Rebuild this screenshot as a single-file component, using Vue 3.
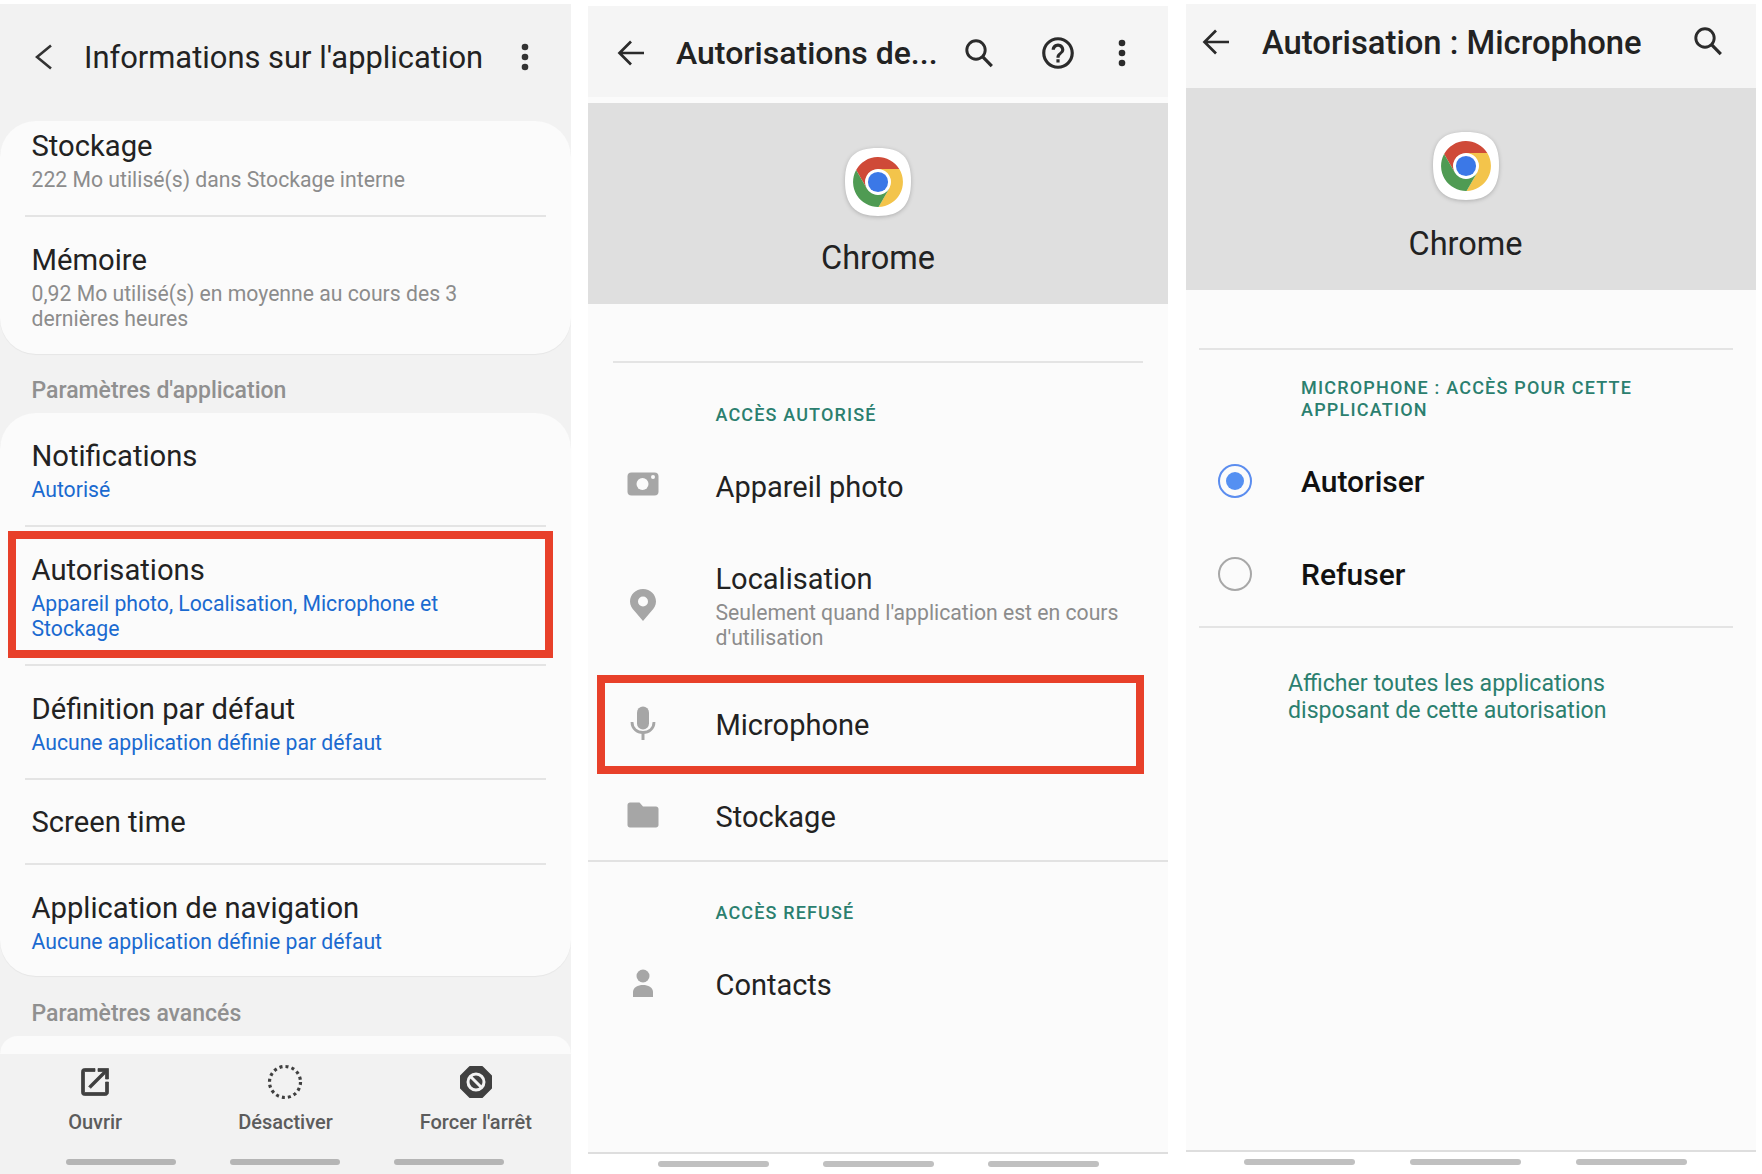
<template>
  <div class="screens">
    <!-- App info -->
    <section class="phone phone--info">
      <header class="info-head">
        <svg class="info-back" width="18" height="26" viewBox="0 0 18 26"><path d="M16 1.5 2 13l14 11.5" fill="none" stroke="#333" stroke-width="2.6" /></svg>
        <h1 class="info-title">Informations sur l'application</h1>
        <svg class="info-dots" width="8" height="28" viewBox="0 0 8 28"><circle cx="4" cy="4" r="3.3" /><circle cx="4" cy="14" r="3.3" /><circle cx="4" cy="24" r="3.3" /></svg>
      </header>

      <div class="card">
        <div class="row row--first">
          <div class="row__title">Stockage</div>
          <div class="row__sub">222 Mo utilisé(s) dans Stockage interne</div>
        </div>
        <div class="sep"></div>
        <div class="row row--memory">
          <div class="row__title">Mémoire</div>
          <div class="row__sub">0,92 Mo utilisé(s) en moyenne au cours des 3<br />dernières heures</div>
        </div>
      </div>

      <div class="group-label">Paramètres d'application</div>

      <div class="card">
        <div class="row row--notif">
          <div class="row__title">Notifications</div>
          <div class="row__sub row__sub--blue">Autorisé</div>
        </div>
        <div class="sep"></div>
        <div class="row">
          <div class="row__title">Autorisations</div>
          <div class="row__sub row__sub--blue">Appareil photo, Localisation, Microphone et<br />Stockage</div>
          <div class="mark mark--perm"></div>
        </div>
        <div class="sep"></div>
        <div class="row">
          <div class="row__title">Définition par défaut</div>
          <div class="row__sub row__sub--blue">Aucune application définie par défaut</div>
        </div>
        <div class="sep"></div>
        <div class="row row--screen">
          <div class="row__title">Screen time</div>
        </div>
        <div class="sep"></div>
        <div class="row row--nav">
          <div class="row__title">Application de navigation</div>
          <div class="row__sub row__sub--blue">Aucune application définie par défaut</div>
        </div>
      </div>

      <div class="group-label group-label--adv">Paramètres avancés</div>
      <div class="card card--stub"></div>

      <footer class="actions">
        <div class="actions__row">
          <div class="action">
            <svg width="36" height="36" viewBox="0 0 24 24"><path fill="#404040" stroke="#404040" stroke-width=".5" d="M19 19H5V5h7V3H5a2 2 0 0 0-2 2v14a2 2 0 0 0 2 2h14c1.1 0 2-.9 2-2v-7h-2v7zM14 3v2h3.59l-9.83 9.83 1.41 1.41L19 6.41V10h2V3h-7z" /></svg>
            <span>Ouvrir</span>
          </div>
          <div class="action">
            <svg width="36" height="36" viewBox="0 0 36 36"><circle cx="18" cy="18" r="15.5" fill="none" stroke="#404040" stroke-width="3.2" stroke-dasharray="3 3.09" /></svg>
            <span>Désactiver</span>
          </div>
          <div class="action">
            <svg width="36" height="36" viewBox="0 0 36 36">
              <path fill="#404040" stroke="#404040" stroke-width="2" stroke-linejoin="round" d="M12 3h12l9 9v12l-9 9H12l-9-9V12z" />
              <circle cx="18" cy="18" r="8" fill="none" stroke="#f2f2f2" stroke-width="3" />
              <path d="m13 13 10 10" stroke="#f2f2f2" stroke-width="3" />
            </svg>
            <span>Forcer l'arrêt</span>
          </div>
        </div>
        <div class="pills pills--info">
          <i v-for="n in 3" :key="n"></i>
        </div>
      </footer>
    </section>

    <!-- App permissions -->
    <section class="phone phone--perms">
      <header class="bar bar--perms">
        <svg class="bar__back" width="28" height="26" viewBox="0 0 28 26"><path d="M27 13H3M14 1.5 2.5 13 14 24.5" fill="none" stroke="#2b2b2b" stroke-width="2.7" /></svg>
        <h1 class="bar__title">Autorisations de...</h1>
        <svg class="bar__search" width="30" height="30" viewBox="0 0 30 30"><circle cx="12" cy="12" r="9.2" fill="none" stroke="#2b2b2b" stroke-width="2.9" /><path d="m18.8 18.8 9 9.4" stroke="#2b2b2b" stroke-width="3.2" /></svg>
        <svg class="bar__help" width="38" height="38" viewBox="0 0 24 24"><path fill="#2b2b2b" d="M11 18h2v-2h-2v2zm1-16C6.48 2 2 6.48 2 12s4.48 10 10 10 10-4.48 10-10S17.52 2 12 2zm0 18c-4.41 0-8-3.59-8-8s3.59-8 8-8 8 3.59 8 8-3.59 8-8 8zm0-14c-2.21 0-4 1.79-4 4h2c0-1.1.9-2 2-2s2 .9 2 2c0 2-3 1.75-3 5h2c0-2.25 3-2.5 3-5 0-2.21-1.79-4-4-4z" /></svg>
        <svg class="bar__dots" width="8" height="28" viewBox="0 0 8 28"><circle cx="4" cy="4" r="3.3" /><circle cx="4" cy="14" r="3.3" /><circle cx="4" cy="24" r="3.3" /></svg>
      </header>

      <div class="hero hero--perms">
        <svg class="chrome" width="68" height="70" viewBox="0 0 68 70">
          <path fill="#fff" d="M34 1C57 1 67 10 67 34S57 69 34 69 1 58 1 34 11 1 34 1z" />
          <g :transform="chromeMove">
            <path fill="#cf4a38" :d="chromeRed" />
            <path fill="#f3c44b" :d="chromeYellow" />
            <path fill="#4f9b53" :d="chromeGreen" />
            <circle r="13" fill="#fff" />
            <circle r="10.5" fill="#3b78e7" />
          </g>
        </svg>
        <div class="hero__name">Chrome</div>
      </div>

      <div class="perm-list">
        <div class="sep sep--perms"></div>
        <div class="caption caption--allowed">ACCÈS AUTORISÉ</div>

        <div class="perm perm--top">
          <div class="perm__icon perm__icon--camera">
            <svg width="32" height="24" viewBox="0 0 32 24">
              <rect x=".5" y=".5" width="31" height="23" rx="4" fill="#a6a6a6" />
              <circle cx="15.5" cy="12" r="6" fill="#fbfbfb" />
              <circle cx="26" cy="5" r="2" fill="#fbfbfb" />
            </svg>
          </div>
          <div class="perm__text">
            <div class="perm__title">Appareil photo</div>
          </div>
        </div>

        <div class="perm">
          <div class="perm__icon perm__icon--pin">
            <svg width="28" height="34" viewBox="0 0 28 34">
              <path fill="#a6a6a6" d="M14 1C6.500 1 1 6.600 1 13.500c0 4 2 6.800 4.500 9.500L14 33l8.500-10C25 20.300 27 17.500 27 13.500 27 6.600 21.500 1 14 1z" />
              <circle cx="14" cy="13.500" r="5" fill="#fbfbfb" />
            </svg>
          </div>
          <div class="perm__text">
            <div class="perm__title">Localisation</div>
            <div class="perm__sub">Seulement quand l'application est en cours<br />d'utilisation</div>
          </div>
        </div>

        <div class="perm perm--mic">
          <div class="perm__icon">
            <svg width="26" height="34" viewBox="0 0 26 34">
              <rect x="7" y=".5" width="12" height="23" rx="6" fill="#a6a6a6" />
              <path d="M2 16c0 6.500 5 10.500 11 10.500S24 22.500 24 16" fill="none" stroke="#a6a6a6" stroke-width="2.8" />
              <path d="M13 26v8" stroke="#a6a6a6" stroke-width="3" />
            </svg>
          </div>
          <div class="perm__text">
            <div class="perm__title">Microphone</div>
          </div>
          <div class="mark mark--mic"></div>
        </div>

        <div class="perm perm--last">
          <div class="perm__icon">
            <svg width="32" height="26" viewBox="0 0 32 26"><path fill="#a6a6a6" d="M3 .5h9.500L16 4.500h13c1.400 0 2.500 1.100 2.500 2.500v16c0 1.400-1.100 2.500-2.500 2.500H3C1.600 25.500.5 24.400.5 23V3C.5 1.600 1.600.5 3 .5z" /></svg>
          </div>
          <div class="perm__text">
            <div class="perm__title">Stockage</div>
          </div>
        </div>

        <div class="rule"></div>
        <div class="caption caption--denied">ACCÈS REFUSÉ</div>

        <div class="perm perm--contacts">
          <div class="perm__icon">
            <svg width="22" height="28" viewBox="0 0 22 28">
              <circle cx="11" cy="7" r="6.5" fill="#a6a6a6" />
              <path fill="#a6a6a6" d="M1 28v-5c0-4.500 5-7 10-7s10 2.500 10 7v5z" />
            </svg>
          </div>
          <div class="perm__text">
            <div class="perm__title">Contacts</div>
          </div>
        </div>
      </div>

      <footer class="nav-foot nav-foot--perms">
        <div class="pills pills--perms">
          <i v-for="n in 3" :key="n"></i>
        </div>
      </footer>
    </section>

    <!-- Microphone permission -->
    <section class="phone phone--mic">
      <header class="bar bar--mic">
        <svg class="bar__back" width="28" height="26" viewBox="0 0 28 26"><path d="M27 13H3M14 1.5 2.5 13 14 24.5" fill="none" stroke="#2b2b2b" stroke-width="2.7" /></svg>
        <h1 class="bar__title">Autorisation : Microphone</h1>
        <svg class="bar__search" width="30" height="30" viewBox="0 0 30 30"><circle cx="12" cy="12" r="9.2" fill="none" stroke="#2b2b2b" stroke-width="2.9" /><path d="m18.8 18.8 9 9.4" stroke="#2b2b2b" stroke-width="3.2" /></svg>
      </header>

      <div class="hero hero--mic">
        <svg class="chrome" width="68" height="70" viewBox="0 0 68 70">
          <path fill="#fff" d="M34 1C57 1 67 10 67 34S57 69 34 69 1 58 1 34 11 1 34 1z" />
          <g :transform="chromeMove">
            <path fill="#cf4a38" :d="chromeRed" />
            <path fill="#f3c44b" :d="chromeYellow" />
            <path fill="#4f9b53" :d="chromeGreen" />
            <circle r="13" fill="#fff" />
            <circle r="10.5" fill="#3b78e7" />
          </g>
        </svg>
        <div class="hero__name">Chrome</div>
      </div>

      <div class="choice-list">
        <div class="sep sep--mic"></div>
        <div class="caption caption--mic">MICROPHONE : ACCÈS POUR CETTE<br />APPLICATION</div>

        <div class="choice choice--top">
          <span class="radio radio--on"></span>
          <span class="choice__label">Autoriser</span>
        </div>
        <div class="choice choice--bottom">
          <span class="radio"></span>
          <span class="choice__label">Refuser</span>
        </div>

        <div class="sep sep--choice"></div>
        <div class="see-all">Afficher toutes les applications<br />disposant de cette autorisation</div>
      </div>

      <footer class="nav-foot nav-foot--mic">
        <div class="pills pills--mic">
          <i v-for="n in 3" :key="n"></i>
        </div>
      </footer>
    </section>
  </div>
</template>

<script setup>
const chromeMove = 'translate(34 35) scale(.96)'
const chromeRed = 'M0 -13.5L22.2 -13.5A26 26 0 0 0 -22.79 -12.48L-11.69 6.75A13.5 13.5 0 0 1 0 -13.5Z'
const chromeYellow = 'M0 -13.5L22.2 -13.5A26 26 0 0 1 .59 25.98L11.69 6.75A13.5 13.5 0 0 0 0 -13.5Z'
const chromeGreen = 'M-11.69 6.75L-22.79 -12.48A26 26 0 0 0 .59 25.98L11.69 6.75A13.5 13.5 0 0 1 -11.69 6.75Z'
</script>

<style>
html,
body {
  margin: 0;
  background: #fff;
}
</style>

<style scoped>
.screens {
  display: flex;
  width: 1762px;
  height: 1174px;
  overflow: hidden;
  background: #fff;
  font-family: Roboto, 'Liberation Sans', sans-serif;
  color: #222;
}

.phone {
  display: flex;
  flex-direction: column;
  flex-shrink: 0;
  background: #fbfbfb;
}

.phone--info {
  width: 571px;
  margin-top: 4px;
  background: #f2f2f2;
}

.phone--perms {
  width: 580px;
  margin: 6px 0 0 17px;
}

.phone--mic {
  width: 570px;
  margin: 4px 0 0 18px;
}

/* ── App info panel ───────────────────────────────── */
.info-head {
  display: flex;
  align-items: center;
  height: 106px;
  margin-bottom: 11px;
  padding-left: 35px;
}

.info-title {
  margin: 2px 0 0 31px;
  font-size: 30.9px;
  font-weight: 400;
  line-height: 40px;
  white-space: nowrap;
}

.info-dots {
  margin-left: 38px;
  fill: #333;
}

.card {
  background: #fbfbfb;
  border-radius: 36px;
  box-shadow: 0 1px 1px rgba(0, 0, 0, 0.05);
}

.card--stub {
  height: 18px;
  border-radius: 36px 36px 0 0;
}

.sep {
  height: 2px;
  margin: 0 25px;
  background: #e4e4e4;
}

.row {
  position: relative;
  padding: 26px 31.5px 23px;
}

.row--first {
  padding-top: 8px;
  padding-bottom: 23px;
}

.row--memory {
  padding-top: 26px;
  padding-bottom: 23px;
}

.row--screen {
  padding-top: 25px;
  padding-bottom: 24px;
}

.row--nav {
  padding-bottom: 22px;
}

.row__title {
  font-size: 29.2px;
  line-height: 34px;
  white-space: nowrap;
}

.row__sub {
  margin-top: 4px;
  font-size: 21.2px;
  line-height: 25px;
  color: #8c8c8c;
  white-space: nowrap;
}

.row__sub--blue {
  color: #1a6ad0;
}

.group-label {
  padding: 24px 31.5px 9px;
  font-size: 23px;
  font-weight: 500;
  line-height: 26px;
  color: #909090;
}

.group-label--adv {
  padding-top: 25px;
  padding-bottom: 9px;
}

.actions {
  flex: 1;
  background: #f2f2f2;
}

.actions__row {
  display: grid;
  grid-template-columns: repeat(3, 1fr);
  padding-top: 10px;
}

.action {
  display: flex;
  flex-direction: column;
  align-items: center;
  font-size: 20px;
  font-weight: 500;
  line-height: 24px;
  color: #5c5c5c;
}

.action span {
  margin-top: 10px;
}

.pills {
  display: flex;
}

.pills i {
  display: block;
  height: 6px;
  border-radius: 3px;
  background: #b5b5b5;
}

.pills--info {
  gap: 54px;
  margin-top: 25px;
  padding-left: 66px;
}

.pills--info i {
  width: 110px;
}

/* ── Shared header / hero ─────────────────────────── */
.bar {
  display: flex;
  align-items: center;
  box-sizing: border-box;
  background: #f5f5f5;
}

.bar--perms {
  height: 91px;
  margin-bottom: 6px;
  padding-top: 2px;
}

.bar--mic {
  height: 84px;
  padding-bottom: 8px;
}

.bar__back {
  flex-shrink: 0;
  margin-left: 29px;
}

.bar--mic .bar__back {
  margin-left: 16px;
}

.bar__title {
  margin: 0 0 0 31px;
  font-size: 32px;
  font-weight: 500;
  line-height: 40px;
  white-space: nowrap;
}

.bar--mic .bar__title {
  margin: 1px 0 0 32px;
  font-size: 32.8px;
}

.bar__search {
  flex-shrink: 0;
  margin-left: 26px;
}

.bar--mic .bar__search {
  margin: 0 0 2px 51px;
}

.bar__help {
  flex-shrink: 0;
  margin-left: 45px;
}

.bar__dots {
  flex-shrink: 0;
  margin-left: 41px;
  fill: #2b2b2b;
}

.hero {
  display: flex;
  flex-direction: column;
  align-items: center;
  box-sizing: border-box;
  background: #dfdfdf;
}

.hero--perms {
  height: 201px;
  padding-top: 44px;
}

.hero--mic {
  height: 202px;
  padding: 43px 11px 0 0;
}

.chrome {
  display: block;
  filter: drop-shadow(0 1px 2px rgba(0, 0, 0, 0.22));
}

.hero__name {
  margin-top: 22.5px;
  font-size: 32.5px;
  line-height: 36px;
}

.hero--mic .hero__name {
  margin-top: 25px;
}

/* ── Permission list ──────────────────────────────── */
.perm-list,
.choice-list {
  flex: 1;
}

.sep--perms {
  margin: 57px 25px 0;
}

.caption {
  font-size: 18px;
  font-weight: 500;
  line-height: 24px;
  letter-spacing: 1.15px;
  color: #2b7f6f;
}

.caption--allowed {
  margin: 40px 0 14px 127.5px;
}

.caption--denied {
  margin: 39px 0 14px 127.5px;
}

.perm {
  position: relative;
  display: flex;
  align-items: center;
  padding: 29px 0;
}

.perm--mic {
  padding: 29px 0;
}

.perm--last {
  padding-bottom: 26px;
}

.perm__icon {
  display: flex;
  flex-shrink: 0;
  justify-content: center;
  width: 110px;
  margin: -2px 17.5px 2px 0;
}

.perm__icon--camera {
  margin-top: -3px;
  margin-bottom: 3px;
}

.perm__icon--pin {
  margin-top: -1px;
  margin-bottom: 1px;
}

.perm__title {
  font-size: 29px;
  line-height: 34px;
  white-space: nowrap;
}

.perm__sub {
  margin-top: 4px;
  font-size: 21.2px;
  line-height: 25px;
  color: #8c8c8c;
  white-space: nowrap;
}

.rule {
  height: 2px;
  background: #e2e2e2;
}

.nav-foot {
  box-sizing: border-box;
  border-top: 2px solid #dedede;
  background: #fff;
}

.nav-foot--perms {
  height: 22px;
}

.nav-foot--mic {
  height: 24px;
}

.pills--perms,
.pills--mic {
  margin-top: 7px;
}

.pills--perms {
  gap: 54px;
  padding-left: 70px;
}

.pills--mic {
  gap: 55px;
  padding-left: 58px;
}

.pills--perms i,
.pills--mic i {
  width: 111px;
  background: #c0c0c0;
}

/* ── Red highlights ───────────────────────────────── */
.mark {
  position: absolute;
  box-sizing: border-box;
  border: 8px solid #e8402a;
  pointer-events: none;
}

.mark--perm {
  top: 4px;
  left: 8px;
  width: 545px;
  height: 127px;
}

.mark--mic {
  top: -4px;
  left: 9px;
  width: 547px;
  height: 99px;
}

/* ── Microphone choice ────────────────────────────── */
.sep--mic {
  margin: 58px 23px 0 13px;
}

.caption--mic {
  margin: 27px 0 15px 115px;
  line-height: 22px;
  letter-spacing: 1.2px;
}

.choice {
  display: flex;
  align-items: center;
  padding: 29px 0;
}

.choice--bottom {
  padding: 30px 0 27px;
}

.radio {
  position: relative;
  flex-shrink: 0;
  box-sizing: border-box;
  width: 34px;
  height: 34px;
  margin: -1px 49px 1px 32px;
  border: 2px solid #a8a8a8;
  border-radius: 50%;
}

.radio--on {
  border-color: #5b8def;
}

.radio--on::after {
  content: '';
  position: absolute;
  top: 6px;
  left: 6px;
  width: 18px;
  height: 18px;
  border-radius: 50%;
  background: #5590f2;
}

.choice__label {
  font-size: 30px;
  font-weight: 500;
  line-height: 34px;
  color: #111;
}

.sep--choice {
  margin: 7px 23px 0 13px;
}

.see-all {
  margin: 42px 0 0 102px;
  font-size: 23.1px;
  line-height: 27px;
  color: #2b7f6f;
  white-space: nowrap;
}
</style>
